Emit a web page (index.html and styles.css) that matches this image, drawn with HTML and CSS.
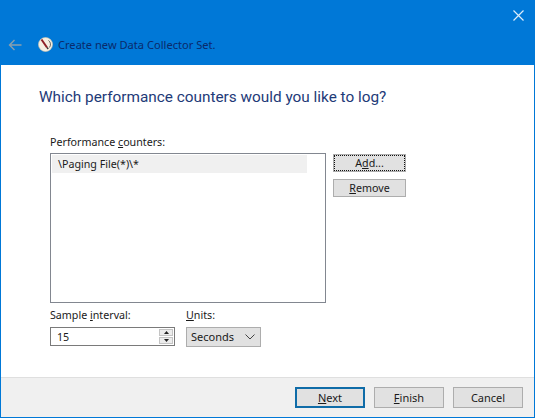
FILE: index.html
```html
<!DOCTYPE html>
<html lang="en">
<head>
    <meta charset="UTF-8">
    <meta name="viewport" content="width=device-width, initial-scale=1.0">
    <title>Create new Data Collector Set</title>
    <link rel="stylesheet" href="styles.css">
</head>
<body>
    <div class="window">
        <div class="titlebar">
            <div class="close-row">
                <svg class="close" width="11" height="11" viewBox="0 0 11 11"><path d="M0.5 0.5L10.5 10.5M10.5 0.5L0.5 10.5" stroke="#dcecfa" stroke-width="1.2" fill="none"/></svg>
            </div>
            <div class="nav-row">
                <svg class="back" width="14" height="12" viewBox="0 0 14 12"><path d="M13.5 6H1.5M6.5 1L1.5 6L6.5 11" stroke="#8a9fae" stroke-width="1.4" fill="none"/></svg>
                <svg class="app-icon" width="15" height="15" viewBox="0 0 15 15">
                    <circle cx="7.5" cy="7.5" r="7" fill="#f6efe2" stroke="#d8c9ae" stroke-width="0.6"/>
                    <path d="M10.5 3.4A5 5 0 0 1 11.4 10.5" fill="none" stroke="#555" stroke-width="0.9"/>
                    <path d="M3.5 2.5L9 10.5" stroke="#8e1f26" stroke-width="2"/>
                    <path d="M9 10.5L10.2 12" stroke="#333" stroke-width="1.4"/>
                </svg>
                <span class="wizard-title">Create new Data Collector Set.</span>
            </div>
        </div>
        <div class="content">
            <h1>Which performance counters would you like to log?</h1>
            <div class="label">Performance <u>c</u>ounters:</div>
            <div class="counters">
                <div class="listbox">
                    <div class="list-item">\Paging File(*)\*</div>
                </div>
                <div class="side-buttons">
                    <button class="btn btn-focus">A<u>d</u>d...</button>
                    <button class="btn"><u>R</u>emove</button>
                </div>
            </div>
            <div class="fields">
                <div class="field-interval">
                    <div class="label">Sample <u>i</u>nterval:</div>
                    <div class="spin">
                        <span class="spin-value">15</span>
                        <div class="spin-arrows">
                            <div class="spin-btn"><svg width="7" height="4" viewBox="0 0 7 4"><path d="M3.5 0L7 4H0Z" fill="#222"/></svg></div>
                            <div class="spin-btn"><svg width="7" height="4" viewBox="0 0 7 4"><path d="M0 0H7L3.5 4Z" fill="#222"/></svg></div>
                        </div>
                    </div>
                </div>
                <div class="field-units">
                    <div class="label"><u>U</u>nits:</div>
                    <div class="select">
                        <span>Seconds</span>
                        <svg width="10" height="6" viewBox="0 0 10 6"><path d="M0.5 0.5L5 5L9.5 0.5" stroke="#444" stroke-width="1" fill="none"/></svg>
                    </div>
                </div>
            </div>
        </div>
        <div class="footer">
            <button class="btn btn-wide btn-default"><u>N</u>ext</button>
            <button class="btn btn-wide"><u>F</u>inish</button>
            <button class="btn btn-wide">Cancel</button>
        </div>
    </div>
</body>
</html>
```

FILE: styles.css
```css
html, body {
    margin: 0;
    padding: 0;
}
body {
    width: 535px;
    height: 418px;
    overflow: hidden;
    font-family: "Noto Sans", "Open Sans", Arial, sans-serif;
    font-size: 10.7px;
    color: #1a1a1a;
    background: #fff;
}
.window {
    box-sizing: border-box;
    width: 535px;
    height: 418px;
    display: flex;
    flex-direction: column;
    border: 1px solid #0078d7;
    border-top: none;
}
.titlebar {
    height: 65px;
    margin: 0 -1px;
    background: #0078d7;
    flex: none;
}
.close-row {
    display: flex;
    justify-content: flex-end;
    padding: 10px 11px 0 0;
    height: 13px;
}
.nav-row {
    display: flex;
    align-items: center;
    padding: 14px 0 0 8px;
}
.back {
    margin-right: 16px;
}
.app-icon {
    margin-right: 5px;
}
.wizard-title {
    color: #0a2a6b;
    font-size: 11.1px;
}
.content {
    flex: 1;
    padding: 0 0 0 49px;
}
h1 {
    margin: 21px 0 0 -11px;
    font-family: Roboto, "Noto Sans", sans-serif;
    font-size: 15.35px;
    line-height: 22px;
    font-weight: normal;
    color: #1e3a78;
}
.label {
    line-height: 14px;
}
.content > .label {
    margin-top: 27px;
}
.counters {
    display: flex;
    align-items: flex-start;
    margin-top: 4px;
}
.listbox {
    box-sizing: border-box;
    width: 276px;
    height: 150px;
    border: 1px solid #828790;
    padding: 1px;
}
.list-item {
    width: 255px;
    height: 18px;
    line-height: 18px;
    padding-left: 6px;
    box-sizing: border-box;
    background: #f0f0f0;
}
.side-buttons {
    display: flex;
    flex-direction: column;
    gap: 7px;
    margin: 1px 0 0 7px;
}
.btn {
    box-sizing: border-box;
    width: 73px;
    height: 18px;
    padding: 0;
    font: inherit;
    color: #1a1a1a;
    background: #e1e1e1;
    border: 1px solid #adadad;
}
.btn-focus {
    outline: 1px dotted #111;
    outline-offset: -2px;
}
.fields {
    display: flex;
    margin-top: 5px;
}
.field-interval {
    width: 136px;
}
.spin {
    box-sizing: border-box;
    width: 125px;
    height: 19px;
    margin-top: 5px;
    display: flex;
    justify-content: space-between;
    border: 1px solid #7a7a7a;
    padding: 1px 1px 1px 6px;
}
.spin-value {
    line-height: 17px;
}
.spin-arrows {
    width: 14px;
    display: flex;
    flex-direction: column;
    gap: 1px;
}
.spin-btn {
    flex: 1;
    display: flex;
    align-items: center;
    justify-content: center;
    background: #ececec;
    border: 1px solid #c4c4c4;
}
.spin-btn svg {
    width: 5px;
    height: 3px;
}
.select {
    box-sizing: border-box;
    width: 75px;
    height: 20px;
    margin-top: 5px;
    display: flex;
    align-items: center;
    justify-content: space-between;
    padding: 0 5px 1px 4px;
    background: #e1e1e1;
    border: 1px solid #adadad;
    font-size: 11px;
}
.footer {
    flex: none;
    height: 40px;
    box-sizing: border-box;
    background: #f0f0f0;
    border-top: 1px solid #dfdfdf;
    display: flex;
    justify-content: flex-end;
    gap: 9px;
    padding: 9px 11px 0 0;
}
.btn-wide {
    width: 70px;
    height: 21px;
    font-size: 11px;
}
.btn-default {
    border: 2px solid #0f6ca8;
}
```
